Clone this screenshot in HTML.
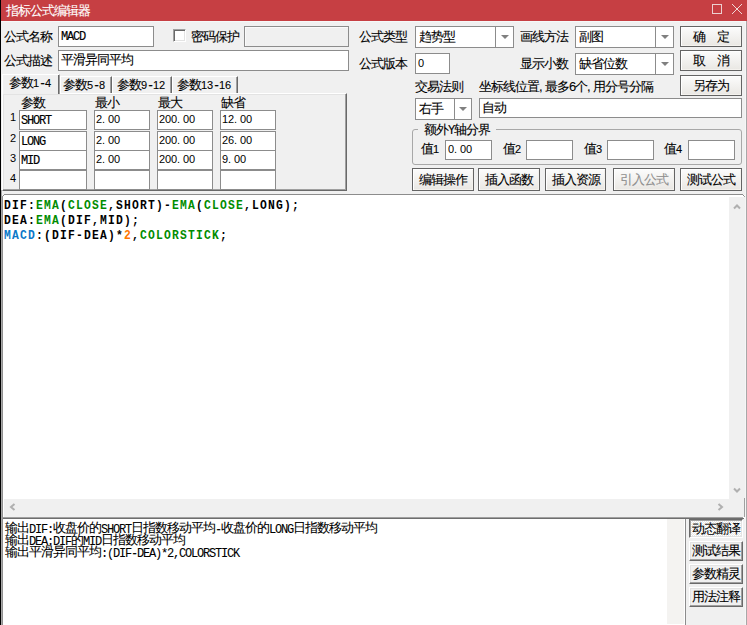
<!DOCTYPE html>
<html><head><meta charset="utf-8">
<style>
*{box-sizing:border-box;margin:0;padding:0}
html,body{width:747px;height:625px;overflow:hidden;background:#f0f0f0;font-family:"Liberation Sans",sans-serif;font-size:12px;color:#000}
.a{position:absolute}
.l{position:absolute;font-size:13px;line-height:13px;letter-spacing:-1px;white-space:nowrap;-webkit-text-stroke-width:0.1px}
.m{font-family:"Liberation Mono",monospace;font-size:12px;letter-spacing:-1.2px}
.hd{display:inline-block;width:6px;font-style:normal;font-family:"Liberation Sans",sans-serif;font-size:11px;letter-spacing:0}
.hm{display:inline-block;width:6px;font-style:normal;font-family:"Liberation Mono",monospace;font-size:12px;letter-spacing:0}
.hw{display:inline-block;width:6px;overflow:visible}
.in{position:absolute;background:#fff;border:1px solid #8c8c8c}
.mono{font-family:"Liberation Mono",monospace;font-size:12px;letter-spacing:-1.2px;line-height:12px;-webkit-text-stroke-width:0.15px;white-space:nowrap;position:absolute}
.btn{position:absolute;border:1px solid #646464;background:linear-gradient(#fcfcfc,#e9e7e3);box-shadow:inset 1px 1px 0 #fff,inset -1px -1px 0 #f4f2ee;text-align:center;font-size:13px;line-height:13px;letter-spacing:-1px;white-space:nowrap;-webkit-text-stroke-width:0.1px}
.cbtn{position:absolute;border-top:1px solid #fff;border-left:1px solid #fff;border-right:1px solid #696969;border-bottom:1px solid #696969;box-shadow:inset -1px -1px 0 #a0a0a0,inset 1px 1px 0 #e3e3e3;background:#f0f0f0;font-size:13px;line-height:13px;letter-spacing:-1px;white-space:nowrap;-webkit-text-stroke-width:0.1px}
.combo{position:absolute;background:#fff;border:1px solid #8c8c8c}
.combo .dd{position:absolute;top:0;right:0;height:100%;border-left:1px solid #8c8c8c;background:#fff}
.combo .dd i{position:absolute;width:0;height:0;border-left:4px solid transparent;border-right:4px solid transparent;border-top:4px solid #808080}
.code{position:absolute;font-family:"Liberation Mono",monospace;font-weight:bold;font-size:13.33px;line-height:15px;white-space:pre;letter-spacing:1.41px;transform:scaleX(0.85);transform-origin:0 0}
.g{color:#008c00}.b{color:#0a78c8}.o{color:#ff7800}
.out{position:absolute;font-size:13px;line-height:13px;letter-spacing:-1px;white-space:pre;-webkit-text-stroke-width:0.08px}
.dg{position:absolute;font-family:"Liberation Sans",sans-serif;font-size:11px;line-height:12px;white-space:nowrap}
.dg i{display:inline-block;width:6px;font-style:normal;text-align:left}
.om{font-family:"Liberation Mono",monospace;font-size:12px;letter-spacing:-1.2px;position:relative;top:1px}
</style></head><body>
<div class="a" style="left:0px;top:0px;width:1px;height:625px;background:#000"></div>
<div class="a" style="left:1px;top:0px;width:746px;height:21px;background:#c63f43"></div>
<div class="a" style="left:1px;top:21px;width:745px;height:1px;background:#f6f8f8"></div>
<div class="l" style="left:6px;top:4px;color:#fff">指标公式编辑器</div>
<div class="a" style="left:712px;top:4px;width:10px;height:10px;border:1px solid #ecd0d0"></div>
<svg class="a" style="left:732px;top:4px" width="10" height="10"><path d="M0 0L10 10M10 0L0 10" stroke="#f0d8d8" stroke-width="1"/></svg>
<div class="a" style="left:745px;top:22px;width:1px;height:603px;background:#f6f6f6"></div>
<div class="a" style="left:746px;top:21px;width:1px;height:604px;background:#a8a8a8"></div>
<div class="l" style="left:4px;top:30px;">公式名称</div>
<div class="in" style="left:58px;top:26px;width:96px;height:21px;"></div>
<div class="mono" style="left:61px;top:31px;">MACD</div>
<div class="a" style="left:173px;top:29px;width:13px;height:13px;background:#fff;border-top:1px solid #a0a0a0;border-left:1px solid #a0a0a0;border-right:1px solid #fff;border-bottom:1px solid #fff;box-shadow:inset 1px 1px 0 #696969,inset -1px -1px 0 #e3e3e3"></div>
<div class="l" style="left:191px;top:30px;">密码保护</div>
<div class="a" style="left:244px;top:26px;width:105px;height:21px;background:#f0f0f0;border:1px solid #8c8c8c;box-shadow:inset 1px 1px 0 #fafafa"></div>
<div class="l" style="left:4px;top:54px;">公式描述</div>
<div class="in" style="left:58px;top:50px;width:291px;height:21px;"></div>
<div class="l" style="left:61px;top:53px;">平滑异同平均</div>
<div class="a" style="left:2px;top:93px;width:345px;height:98px;border-top:1px solid #fff;border-left:1px solid #fff;border-right:1px solid #696969;border-bottom:1px solid #696969;box-shadow:inset -1px -1px 0 #a0a0a0,inset 1px 1px 0 #e3e3e3"></div>
<div class="a" style="left:60px;top:76px;width:52px;height:17px;border-top:1px solid #fff;border-left:1px solid #fff;border-right:1px solid #696969;box-shadow:inset -1px 0 0 #a0a0a0"></div>
<div class="l" style="left:63px;top:78px;">参数<i class="hd">5</i><i class="hm">-</i><i class="hd">8</i></div>
<div class="a" style="left:112px;top:76px;width:60px;height:17px;border-top:1px solid #fff;border-left:1px solid #fff;border-right:1px solid #696969;box-shadow:inset -1px 0 0 #a0a0a0"></div>
<div class="l" style="left:117px;top:78px;">参数<i class="hd">9</i><i class="hm">-</i><i class="hd">1</i><i class="hd">2</i></div>
<div class="a" style="left:172px;top:76px;width:66px;height:17px;border-top:1px solid #fff;border-left:1px solid #fff;border-right:1px solid #696969;box-shadow:inset -1px 0 0 #a0a0a0"></div>
<div class="l" style="left:177px;top:78px;">参数<i class="hd">1</i><i class="hd">3</i><i class="hm">-</i><i class="hd">1</i><i class="hd">6</i></div>
<div class="a" style="left:2px;top:74px;width:58px;height:20px;background:#f0f0f0;border-top:1px solid #fff;border-left:1px solid #fff;border-right:1px solid #a0a0a0;box-shadow:inset -1px 0 0 #696969"></div>
<div class="l" style="left:9px;top:76px;">参数<i class="hd">1</i><i class="hm">-</i><i class="hd">4</i></div>
<div class="l" style="left:21px;top:96px;">参数</div>
<div class="l" style="left:95px;top:96px;">最小</div>
<div class="l" style="left:158px;top:96px;">最大</div>
<div class="l" style="left:221px;top:96px;">缺省</div>
<div class="dg" style="left:10px;top:111px;font-size:11px;letter-spacing:-0.6px"><i>1</i></div>
<div class="dg" style="left:10px;top:132px;font-size:11px;letter-spacing:-0.6px"><i>2</i></div>
<div class="dg" style="left:10px;top:152px;font-size:11px;letter-spacing:-0.6px"><i>3</i></div>
<div class="dg" style="left:10px;top:172px;font-size:11px;letter-spacing:-0.6px"><i>4</i></div>
<div class="in" style="left:19px;top:110px;width:68px;height:20px;"></div>
<div class="in" style="left:19px;top:131px;width:68px;height:20px;"></div>
<div class="in" style="left:19px;top:150px;width:68px;height:20px;"></div>
<div class="in" style="left:19px;top:170px;width:68px;height:20px;"></div>
<div class="in" style="left:94px;top:110px;width:56px;height:20px;"></div>
<div class="in" style="left:94px;top:131px;width:56px;height:20px;"></div>
<div class="in" style="left:94px;top:150px;width:56px;height:20px;"></div>
<div class="in" style="left:94px;top:170px;width:56px;height:20px;"></div>
<div class="in" style="left:157px;top:110px;width:56px;height:20px;"></div>
<div class="in" style="left:157px;top:131px;width:56px;height:20px;"></div>
<div class="in" style="left:157px;top:150px;width:56px;height:20px;"></div>
<div class="in" style="left:157px;top:170px;width:56px;height:20px;"></div>
<div class="in" style="left:220px;top:110px;width:56px;height:20px;"></div>
<div class="in" style="left:220px;top:131px;width:56px;height:20px;"></div>
<div class="in" style="left:220px;top:150px;width:56px;height:20px;"></div>
<div class="in" style="left:220px;top:170px;width:56px;height:20px;"></div>
<div class="mono" style="left:21px;top:115px;">SHORT</div>
<div class="dg" style="left:96px;top:113px;"><i>2</i><i>.</i><i>0</i><i>0</i></div>
<div class="dg" style="left:159px;top:113px;"><i>2</i><i>0</i><i>0</i><i>.</i><i>0</i><i>0</i></div>
<div class="dg" style="left:222px;top:113px;"><i>1</i><i>2</i><i>.</i><i>0</i><i>0</i></div>
<div class="mono" style="left:21px;top:136px;">LONG</div>
<div class="dg" style="left:96px;top:134px;"><i>2</i><i>.</i><i>0</i><i>0</i></div>
<div class="dg" style="left:159px;top:134px;"><i>2</i><i>0</i><i>0</i><i>.</i><i>0</i><i>0</i></div>
<div class="dg" style="left:222px;top:134px;"><i>2</i><i>6</i><i>.</i><i>0</i><i>0</i></div>
<div class="mono" style="left:21px;top:155px;">MID</div>
<div class="dg" style="left:96px;top:153px;"><i>2</i><i>.</i><i>0</i><i>0</i></div>
<div class="dg" style="left:159px;top:153px;"><i>2</i><i>0</i><i>0</i><i>.</i><i>0</i><i>0</i></div>
<div class="dg" style="left:222px;top:153px;"><i>9</i><i>.</i><i>0</i><i>0</i></div>
<div class="l" style="left:359px;top:30px;">公式类型</div>
<div class="combo" style="left:415px;top:26px;width:99px;height:22px"><div class="dd" style="width:18px"><i style="left:5px;top:8px"></i></div></div>
<div class="l" style="left:419px;top:30px;">趋势型</div>
<div class="l" style="left:359px;top:57px;">公式版本</div>
<div class="in" style="left:415px;top:53px;width:35px;height:21px;"></div>
<div class="dg" style="left:418px;top:57px;"><i>0</i></div>
<div class="l" style="left:520px;top:30px;">画线方法</div>
<div class="combo" style="left:575px;top:26px;width:99px;height:22px"><div class="dd" style="width:18px"><i style="left:5px;top:8px"></i></div></div>
<div class="l" style="left:579px;top:30px;">副图</div>
<div class="l" style="left:520px;top:57px;">显示小数</div>
<div class="combo" style="left:575px;top:53px;width:99px;height:22px"><div class="dd" style="width:18px"><i style="left:5px;top:8px"></i></div></div>
<div class="l" style="left:579px;top:57px;">缺省位数</div>
<div class="btn" style="left:680px;top:26px;width:62px;height:21px;"><span style="position:absolute;left:0;right:0;top:3px">确　定</span></div>
<div class="btn" style="left:680px;top:50px;width:62px;height:21px;"><span style="position:absolute;left:0;right:0;top:3px">取　消</span></div>
<div class="btn" style="left:680px;top:75px;width:62px;height:21px;"><span style="position:absolute;left:0;right:0;top:3px">另存为</span></div>
<div class="l" style="left:415px;top:80px;">交易法则</div>
<div class="l" style="left:479px;top:80px">坐标线位置<span class="hw">,</span>最多<span class="hw">6</span>个<span class="hw">,</span>用分号分隔</div>
<div class="combo" style="left:415px;top:98px;width:57px;height:22px"><div class="dd" style="width:17px"><i style="left:4px;top:8px"></i></div></div>
<div class="l" style="left:419px;top:102px;">右手</div>
<div class="in" style="left:479px;top:98px;width:263px;height:20px;"></div>
<div class="l" style="left:482px;top:101px;">自动</div>
<div class="a" style="left:412px;top:129px;width:330px;height:36px;border:1px solid #a8a8a8;border-radius:3px"></div>
<div class="a" style="left:418px;top:122px;width:78px;height:14px;background:#f0f0f0"></div>
<div class="l" style="left:424px;top:123px;">额外<i class="hm">Y</i>轴分界</div>
<div class="l" style="left:421px;top:142px;">值<i class="hd">1</i></div>
<div class="in" style="left:445px;top:140px;width:47px;height:20px;"></div>
<div class="l" style="left:503px;top:142px;">值<i class="hd">2</i></div>
<div class="in" style="left:526px;top:140px;width:47px;height:20px;"></div>
<div class="l" style="left:584px;top:142px;">值<i class="hd">3</i></div>
<div class="in" style="left:607px;top:140px;width:47px;height:20px;"></div>
<div class="l" style="left:664px;top:142px;">值<i class="hd">4</i></div>
<div class="in" style="left:688px;top:140px;width:47px;height:20px;"></div>
<div class="dg" style="left:448px;top:143px;"><i>0</i><i>.</i><i>0</i><i>0</i></div>
<div class="btn" style="left:412px;top:168px;width:62px;height:23px;"><span style="position:absolute;left:0;right:0;top:4px">编辑操作</span></div>
<div class="btn" style="left:478px;top:168px;width:62px;height:23px;"><span style="position:absolute;left:0;right:0;top:4px">插入函数</span></div>
<div class="btn" style="left:545px;top:168px;width:61px;height:23px;"><span style="position:absolute;left:0;right:0;top:4px">插入资源</span></div>
<div class="btn" style="left:613px;top:168px;width:62px;height:23px;color:#8f8f8f"><span style="position:absolute;left:0;right:0;top:4px">引入公式</span></div>
<div class="btn" style="left:680px;top:168px;width:62px;height:23px;"><span style="position:absolute;left:0;right:0;top:4px">测试公式</span></div>
<div class="a" style="left:3px;top:195px;width:742px;height:324px;background:#fff"></div>
<div class="a" style="left:4px;top:194px;width:739px;height:1px;background:#8c8c8c"></div>
<div class="a" style="left:3px;top:195px;width:1px;height:1px;background:#8c8c8c"></div>
<div class="a" style="left:743px;top:195px;width:1px;height:1px;background:#8c8c8c"></div>
<div class="a" style="left:744px;top:196px;width:1px;height:1px;background:#a0a0a0"></div>
<div class="a" style="left:1px;top:190px;width:1px;height:435px;background:#a8a8a8"></div>
<div class="a" style="left:2px;top:196px;width:1px;height:429px;background:#909090"></div>
<div class="code" style="left:4px;top:198px">DIF:<span class="g">EMA</span>(<span class="g">CLOSE</span>,SHORT)-<span class="g">EMA</span>(<span class="g">CLOSE</span>,LONG);
DEA:<span class="g">EMA</span>(DIF,MID);
<span class="b">MACD</span>:(DIF-DEA)*<span class="o">2</span>,<span class="g">COLORSTICK</span>;</div>
<div class="a" style="left:729px;top:197px;width:16px;height:302px;background:#f0f0f0"></div>
<svg class="a" style="left:733px;top:203px" width="8" height="7"><path d="M1 5.5L4 2.5L7 5.5" fill="none" stroke="#b0b0b0" stroke-width="2"/></svg>
<svg class="a" style="left:733px;top:487px" width="8" height="7"><path d="M1 1.5L4 4.5L7 1.5" fill="none" stroke="#b0b0b0" stroke-width="2"/></svg>
<div class="a" style="left:4px;top:499px;width:740px;height:18px;background:#f0f0f0"></div>
<div class="a" style="left:744px;top:498px;width:1px;height:19px;background:#a0a0a0"></div>
<svg class="a" style="left:9px;top:503px" width="7" height="8"><path d="M5.5 1L2 4L5.5 7" fill="none" stroke="#b0b0b0" stroke-width="2"/></svg>
<svg class="a" style="left:717px;top:503px" width="7" height="8"><path d="M1.5 1L5 4L1.5 7" fill="none" stroke="#b0b0b0" stroke-width="2"/></svg>
<div class="a" style="left:3px;top:517px;width:740px;height:1px;background:#a0a0a0"></div>
<div class="a" style="left:3px;top:518px;width:741px;height:1px;background:#6e6e6e"></div>
<div class="a" style="left:3px;top:519px;width:682px;height:106px;background:#fff"></div>
<div class="a" style="left:667px;top:519px;width:17px;height:105px;background:#f4f3f1"></div>
<div class="a" style="left:685px;top:519px;width:1px;height:106px;background:#8c8c8c"></div>
<div class="out" style="left:5px;top:521px">输出<span class="om">DIF:</span>收盘价的<span class="om">SHORT</span>日指数移动平均<span class="om">-</span>收盘价的<span class="om">LONG</span>日指数移动平均</div>
<div class="out" style="left:5px;top:533px">输出<span class="om">DEA:DIF</span>的<span class="om">MID</span>日指数移动平均</div>
<div class="out" style="left:5px;top:545px">输出平滑异同平均<span class="om">:(DIF-DEA)*2,COLORSTICK</span></div>
<div class="a" style="left:689px;top:519px;width:54px;height:19px;border-top:1px solid #696969;border-left:1px solid #696969;border-right:1px solid #fff;border-bottom:1px solid #fff;box-shadow:inset 1px 1px 0 #a0a0a0,inset -1px -1px 0 #e3e3e3;background-color:#fff;background-image:linear-gradient(45deg,#e8e8e8 25%,transparent 25%,transparent 75%,#e8e8e8 75%),linear-gradient(45deg,#e8e8e8 25%,transparent 25%,transparent 75%,#e8e8e8 75%);background-size:2px 2px;background-position:0 0,1px 1px"></div>
<div class="l" style="left:692px;top:522px;">动态翻译</div>
<div class="cbtn" style="left:689px;top:541px;width:54px;height:20px;"><span style="position:absolute;left:2px;top:2px">测试结果</span></div>
<div class="cbtn" style="left:689px;top:564px;width:54px;height:20px;"><span style="position:absolute;left:2px;top:2px">参数精灵</span></div>
<div class="cbtn" style="left:689px;top:587px;width:54px;height:20px;"><span style="position:absolute;left:2px;top:2px">用法注释</span></div>
</body></html>
